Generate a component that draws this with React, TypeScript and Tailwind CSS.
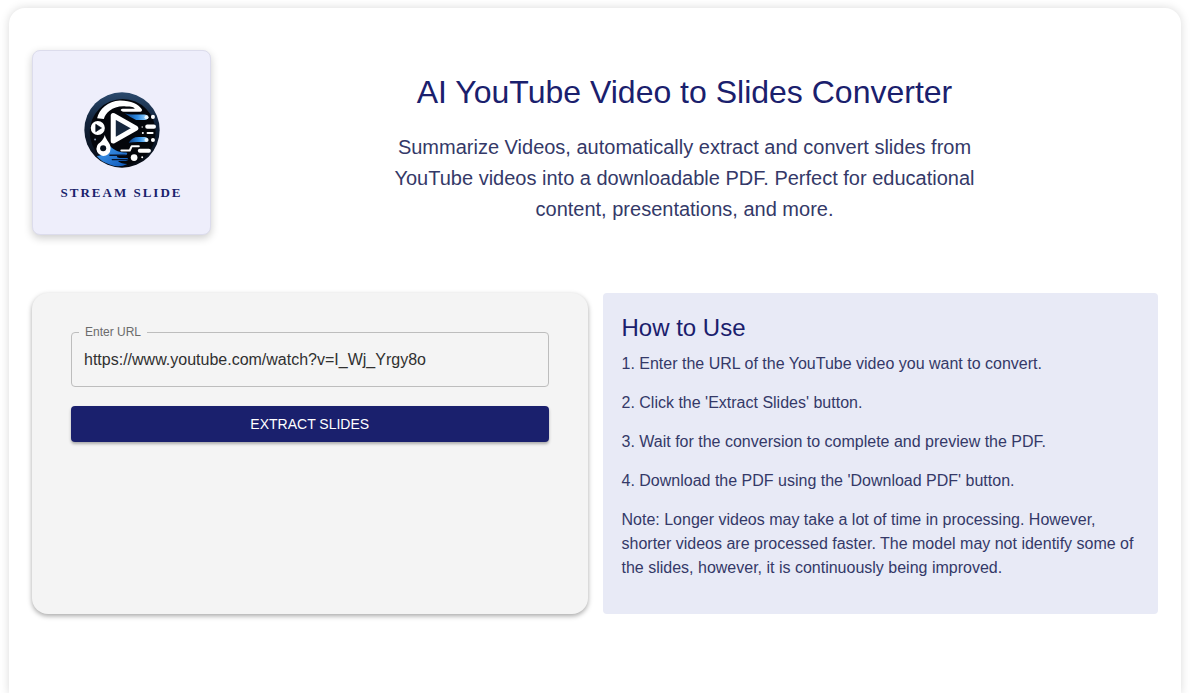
import { useState } from 'react';

const steps = [
  'Enter the URL of the YouTube video you want to convert.',
  "Click the 'Extract Slides' button.",
  'Wait for the conversion to complete and preview the PDF.',
  "Download the PDF using the 'Download PDF' button.",
];

function LogoMark() {
  return (
    <svg viewBox="45 36 226 226" className="h-[76px] w-[76px]" aria-hidden="true">
      <defs>
        <linearGradient id="rim" x1="0" y1="0" x2="0" y2="1">
          <stop offset="0" stopColor="#2b4a6e" />
          <stop offset="0.35" stopColor="#14263f" />
          <stop offset="1" stopColor="#060a12" />
        </linearGradient>
        <linearGradient id="streak" x1="0" y1="0" x2="1" y2="0">
          <stop offset="0" stopColor="#0b3f86" />
          <stop offset="0.55" stopColor="#2f8de4" />
          <stop offset="1" stopColor="#a8dcff" />
        </linearGradient>
        <linearGradient id="wave" x1="0" y1="0" x2="1" y2="1">
          <stop offset="0" stopColor="#4aa5f5" />
          <stop offset="1" stopColor="#0d56b8" />
        </linearGradient>
      </defs>
      <circle cx="158" cy="149" r="112" fill="url(#rim)" />
      <circle cx="160" cy="155" r="98" fill="#04060b" />
      <path
        d="M84 114C90 87 116 62 152 61C186 61 207 72 217 87C219 94 213 95 205 95L163 95C152 93 152 87 160 86L196 86C194 80 186 79 170 79C150 77 134 82 121 92C112 99 107 107 104 116Z"
        fill="#fff"
      />
      <path d="M166 99Q176 103 188 103H224C239 103 239 119 225 119H200Q184 112 166 99Z" fill="url(#streak)" />
      <path d="M178 187Q188 170 207 170H225C238 170 238 185 225 185H204Q190 185 178 187Z" fill="url(#streak)" />
      <circle cx="231" cy="111" r="6" fill="#eaf7ff" />
      <circle cx="231" cy="179" r="6" fill="#eaf7ff" />
      <circle cx="250" cy="110" r="6" fill="#fff" />
      <circle cx="250" cy="179" r="6" fill="#fff" />
      <path d="M114 190L126 200C138 211 151 215 171 216Q178 221 167 224H147Q137 230 151 232H174Q181 238 169 241H146C151 247 163 249 174 250Q150 262 123 252C105 246 92 238 83 226C103 226 116 214 114 190Z" fill="url(#wave)" />
      <path d="M122 224H168M129 237H174" stroke="#07152c" strokeWidth="4" strokeLinecap="round" />
      <circle cx="86" cy="143" r="21" fill="#fff" />
      <path d="M80 132L97 143L80 154Z" fill="#07101d" stroke="#07101d" strokeWidth="2" strokeLinejoin="round" />
      <path d="M107 164C110 180 125 188 124 204A21 21 0 1 1 84 196C89 186 101 184 107 164Z" fill="#fff" />
      <circle cx="102" cy="203" r="9" fill="#07101d" />
      <path
        d="M134 107V181L195 144Z"
        fill="#17283e"
        stroke="#04060b"
        strokeWidth="28"
        strokeLinejoin="round"
      />
      <path
        d="M132 106V182L199 144Z"
        fill="#17283e"
        stroke="#fff"
        strokeWidth="15"
        strokeLinejoin="round"
      />
      <g stroke="#fff" strokeLinecap="round" fill="none">
        <path d="M233 139H253" strokeWidth="12" />
        <path d="M234 158H249" strokeWidth="6" />
        <path d="M211 211H238" strokeWidth="12" />
        <path d="M156 210H181L187 197H208" strokeWidth="6" strokeLinejoin="round" />
      </g>
      <circle cx="194" cy="231" r="10" fill="#fff" />
      <circle cx="218" cy="230" r="3" fill="#fff" />
      <circle cx="220" cy="158" r="3" fill="#fff" />
      <circle cx="218" cy="140" r="2" fill="#fff" />
      <circle cx="78" cy="177" r="3" fill="#8294aa" />
    </svg>
  );
}

function Header() {
  return (
    <header className="flex items-center">
      <div className="flex h-[185px] w-[179px] shrink-0 flex-col items-center rounded-lg border border-[#dcdcec] bg-[#eeeefb] pt-[41px] shadow-[0_3px_8px_rgba(0,0,0,0.2)]">
        <LogoMark />
        <span className="mt-[15px] font-['Liberation_Serif',serif] text-[13px] leading-5 font-semibold tracking-[2px] text-[#1a1f6c]">
          STREAM SLIDE
        </span>
      </div>
      <div className="flex-1 pt-3 text-center">
        <h1 className="text-[32px] leading-10 text-[#1a206d]">AI YouTube Video to Slides Converter</h1>
        <p className="mx-auto mt-5 max-w-[585px] text-xl leading-[31px] text-[#343968]">
          Summarize Videos, automatically extract and convert slides from YouTube videos into a downloadable PDF.
          Perfect for educational content, presentations, and more.
        </p>
      </div>
    </header>
  );
}

function ExtractForm() {
  const [url, setUrl] = useState('https://www.youtube.com/watch?v=I_Wj_Yrgy8o');

  return (
    <form
      className="rounded-2xl bg-[#f4f4f4] p-[39px] shadow-[0_2px_5px_rgba(0,0,0,0.35)]"
      onSubmit={(e) => e.preventDefault()}
    >
      <div className="relative">
        <label htmlFor="video-url" className="absolute -top-2 left-2 bg-[#f4f4f4] px-1.5 text-xs leading-4 text-[#6b6b6b]">
          Enter URL
        </label>
        <input
          id="video-url"
          type="text"
          value={url}
          onChange={(e) => setUrl(e.target.value)}
          className="h-[55px] w-full rounded border border-[#bdbdbd] bg-transparent px-3 text-base text-[#303030]"
        />
      </div>
      <button
        type="submit"
        className="mt-[19px] h-9 w-full rounded bg-[#1a206d] text-sm font-medium text-white shadow-[0_2px_3px_rgba(0,0,0,0.3)]"
      >
        EXTRACT SLIDES
      </button>
    </form>
  );
}

function HowToUse() {
  return (
    <section className="rounded-sm bg-[#e8eaf6] px-[19px] pt-5 pb-[34px]">
      <h2 className="text-2xl leading-[30px] text-[#1a206d]">How to Use</h2>
      <ol className="mt-[9px] flex flex-col gap-[15px] text-base leading-6 text-[#343968]">
        {steps.map((step, index) => (
          <li key={step}>
            {index + 1}. {step}
          </li>
        ))}
      </ol>
      <p className="mt-[15px] text-base leading-6 text-[#343968]">
        Note: Longer videos may take a lot of time in processing. However, shorter videos are processed faster. The
        model may not identify some of the slides, however, it is continuously being improved.
      </p>
    </section>
  );
}

export default function App() {
  return (
    <div className="flex min-h-screen flex-col bg-white pt-2 pr-[19px] pl-[9px] font-['Liberation_Sans',Arial,sans-serif]">
      <main className="flex-1 rounded-t-2xl bg-white px-[23px] pt-[42px] pb-20 shadow-[0_0_10px_rgba(0,0,0,0.15)]">
        <Header />
        <div className="mt-[58px] grid gap-[15px] md:grid-cols-2">
          <ExtractForm />
          <HowToUse />
        </div>
      </main>
    </div>
  );
}
